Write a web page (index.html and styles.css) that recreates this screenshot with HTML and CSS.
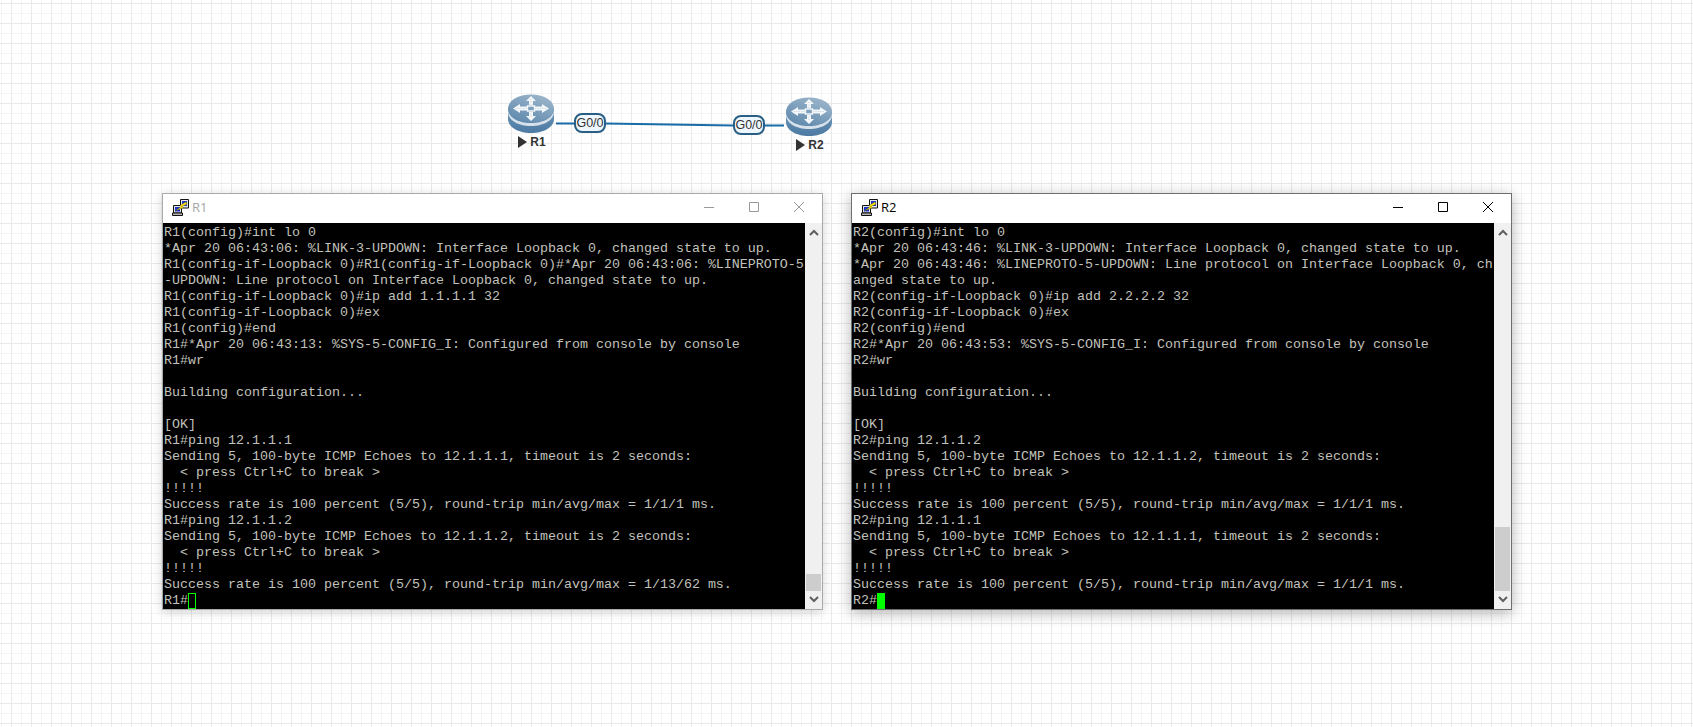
FILE: index.html
```html
<!DOCTYPE html>
<html lang="en">
<head>
<meta charset="utf-8">
<title>Topology</title>
<link rel="stylesheet" href="styles.css">
</head>
<body>
<main class="canvas">
  <svg class="defs" width="0" height="0" aria-hidden="true">
    <defs>
      <linearGradient id="top" x1="0.2" y1="1" x2="0.8" y2="0"><stop offset="0" stop-color="#5f89ad"/><stop offset="1" stop-color="#9db6cb"/></linearGradient>
      <linearGradient id="side" x1="0" y1="0" x2="0" y2="1"><stop offset="0" stop-color="#6f97b8"/><stop offset="1" stop-color="#4c7aa3"/></linearGradient>
      <symbol id="router" viewBox="0 0 46 40">
        <path d="M0 14v11c0 8 10 14 23 14s23-6 23-14V14z" fill="url(#side)"/>
        <path d="M0 15c0 8 10 14 23 14s23-6 23-14v3c0 8-10 14-23 14S0 26 0 18z" fill="#d5e0ea"/>
        <ellipse cx="23" cy="14.500" rx="23" ry="14" fill="url(#top)"/>
        <path d="M23 2l5 5h-3v4h-4V7h-3zM23 27l-5-5h3v-4h4v4h3zM5 14.500l7-4.500v2.500h7v4h-7V19zM41 14.500L34 19v-2.500h-7v-4h7V10z" fill="#f4f7fa"/>
        <path d="M8 14.500h30M23 5v19" stroke="#9fb8cc" stroke-width=".6" stroke-dasharray="1 1.400" fill="none"/>
        <path d="M19.500 12h7v5h-7z" fill="#7ea0bd" stroke="#f4f7fa" stroke-width="1.400"/>
      </symbol>
      <symbol id="putty" viewBox="0 0 17 17">
        <path d="M8.500 .5h8v8.500h-8z" fill="#e4e4e4" stroke="#111"/>
        <path d="M10 2h5v5h-5z" fill="#1f35c4"/>
        <path d="M1.500 6.500h8V14h-8z" fill="#e4e4e4" stroke="#111"/>
        <path d="M3 8h5v4.500H3z" fill="#1f35c4"/>
        <path d="M.5 14h10v2.500H.5z" fill="#b5b5b5" stroke="#111"/>
        <path d="M14 3L8 6.500l1.500 1L4 11.500l7.500-3L10 7.500 15 5z" fill="#ffe600" stroke="#8a7a00" stroke-width=".4"/>
      </symbol>
      <symbol id="chev-up" viewBox="0 0 10 7"><path d="M1 6l4-4 4 4" fill="none" stroke="#606060" stroke-width="2"/></symbol>
      <symbol id="chev-down" viewBox="0 0 10 7"><path d="M1 1l4 4 4-4" fill="none" stroke="#606060" stroke-width="2"/></symbol>
    </defs>
  </svg>

  <svg class="links" width="1693" height="727" aria-hidden="true">
    <path d="M556 123.500L576 123.500M605 123.500L733 125.500M765 125.500H784" fill="none" stroke="#1a6ca8" stroke-width="2"/>
  </svg>

  <div class="node node-r1">
    <svg class="router" width="46" height="40"><use href="#router"/></svg>
    <div class="node-label"><span class="play"></span>R1</div>
  </div>
  <div class="node node-r2">
    <svg class="router" width="46" height="40"><use href="#router"/></svg>
    <div class="node-label"><span class="play"></span>R2</div>
  </div>
  <span class="port port-a">G0/0</span>
  <span class="port port-b">G0/0</span>

  <section class="win win-r1 inactive">
    <header class="titlebar">
      <svg class="appicon" width="17" height="17"><use href="#putty"/></svg>
      <span class="wintitle">R1</span>
      <span class="controls">
        <svg width="14" height="14" viewBox="0 0 14 14"><path d="M2 7.500h10" stroke="currentColor" fill="none"/></svg>
        <svg width="14" height="14" viewBox="0 0 14 14"><path d="M2.500 2.500h9v9h-9z" stroke="currentColor" fill="none"/></svg>
        <svg width="14" height="14" viewBox="0 0 14 14"><path d="M2 2l10 10M12 2L2 12" stroke="currentColor" fill="none"/></svg>
      </span>
    </header>
    <div class="body">
      <pre class="term">R1(config)#int lo 0
*Apr 20 06:43:06: %LINK-3-UPDOWN: Interface Loopback 0, changed state to up.
R1(config-if-Loopback 0)#R1(config-if-Loopback 0)#*Apr 20 06:43:06: %LINEPROTO-5
-UPDOWN: Line protocol on Interface Loopback 0, changed state to up.
R1(config-if-Loopback 0)#ip add 1.1.1.1 32
R1(config-if-Loopback 0)#ex
R1(config)#end
R1#*Apr 20 06:43:13: %SYS-5-CONFIG_I: Configured from console by console
R1#wr

Building configuration...

[OK]
R1#ping 12.1.1.1
Sending 5, 100-byte ICMP Echoes to 12.1.1.1, timeout is 2 seconds:
  &lt; press Ctrl+C to break &gt;
!!!!!
Success rate is 100 percent (5/5), round-trip min/avg/max = 1/1/1 ms.
R1#ping 12.1.1.2
Sending 5, 100-byte ICMP Echoes to 12.1.1.2, timeout is 2 seconds:
  &lt; press Ctrl+C to break &gt;
!!!!!
Success rate is 100 percent (5/5), round-trip min/avg/max = 1/13/62 ms.
R1#<span class="cursor hollow"></span></pre>
      <div class="scrollbar">
        <svg class="arrow" width="10" height="7"><use href="#chev-up"/></svg>
        <div class="track track-r1"><div class="thumb"></div></div>
        <svg class="arrow" width="10" height="7"><use href="#chev-down"/></svg>
      </div>
    </div>
  </section>

  <section class="win win-r2">
    <header class="titlebar">
      <svg class="appicon" width="17" height="17"><use href="#putty"/></svg>
      <span class="wintitle">R2</span>
      <span class="controls">
        <svg width="14" height="14" viewBox="0 0 14 14"><path d="M2 7.500h10" stroke="currentColor" fill="none"/></svg>
        <svg width="14" height="14" viewBox="0 0 14 14"><path d="M2.500 2.500h9v9h-9z" stroke="currentColor" fill="none"/></svg>
        <svg width="14" height="14" viewBox="0 0 14 14"><path d="M2 2l10 10M12 2L2 12" stroke="currentColor" fill="none"/></svg>
      </span>
    </header>
    <div class="body">
      <pre class="term">R2(config)#int lo 0
*Apr 20 06:43:46: %LINK-3-UPDOWN: Interface Loopback 0, changed state to up.
*Apr 20 06:43:46: %LINEPROTO-5-UPDOWN: Line protocol on Interface Loopback 0, ch
anged state to up.
R2(config-if-Loopback 0)#ip add 2.2.2.2 32
R2(config-if-Loopback 0)#ex
R2(config)#end
R2#*Apr 20 06:43:53: %SYS-5-CONFIG_I: Configured from console by console
R2#wr

Building configuration...

[OK]
R2#ping 12.1.1.2
Sending 5, 100-byte ICMP Echoes to 12.1.1.2, timeout is 2 seconds:
  &lt; press Ctrl+C to break &gt;
!!!!!
Success rate is 100 percent (5/5), round-trip min/avg/max = 1/1/1 ms.
R2#ping 12.1.1.1
Sending 5, 100-byte ICMP Echoes to 12.1.1.1, timeout is 2 seconds:
  &lt; press Ctrl+C to break &gt;
!!!!!
Success rate is 100 percent (5/5), round-trip min/avg/max = 1/1/1 ms.
R2#<span class="cursor"></span></pre>
      <div class="scrollbar">
        <svg class="arrow" width="10" height="7"><use href="#chev-up"/></svg>
        <div class="track track-r2"><div class="thumb"></div></div>
        <svg class="arrow" width="10" height="7"><use href="#chev-down"/></svg>
      </div>
    </div>
  </section>
</main>
</body>
</html>
```
FILE: styles.css
```css
html, body {
  margin: 0;
  padding: 0;
  height: 100%;
  overflow: hidden;
}

.canvas {
  position: relative;
  width: 1693px;
  height: 727px;
  overflow: hidden;
  background-color: #fff;
  background-image:
    linear-gradient(to right, #e9e9e9 1px, transparent 1px),
    linear-gradient(to bottom, #e9e9e9 1px, transparent 1px),
    linear-gradient(to right, #f4f4f4 1px, transparent 1px),
    linear-gradient(to bottom, #f4f4f4 1px, transparent 1px);
  background-size: 20px 20px;
  background-position: 11px 0, 0 3px, 1px 0, 0 13px;
}

.defs { position: absolute; }
.links { position: absolute; left: 0; top: 0; }

.node {
  position: absolute;
  width: 46px;
  display: flex;
  flex-direction: column;
  align-items: center;
}
.node-r1 { left: 508px; top: 94px; }
.node-r2 { left: 786px; top: 97px; }
.router { display: block; }

.node-label {
  display: flex;
  align-items: center;
  gap: 3px;
  margin-top: 1px;
  font: bold 12px/14px "Liberation Sans", Arial, sans-serif;
  color: #333;
  transform: translateX(1px);
}
.play {
  width: 0;
  height: 0;
  border-left: 9px solid #333;
  border-top: 6px solid transparent;
  border-bottom: 6px solid transparent;
}

.port {
  position: absolute;
  box-sizing: border-box;
  height: 20px;
  width: 32px;
  text-align: center;
  font: 12.5px/16px "Liberation Sans", Arial, sans-serif;
  color: #333;
  background: #eef7fd;
  border: 2px solid #2a5f85;
  border-radius: 8px;
}
.port-a { left: 574px; top: 113px; }
.port-b { left: 733px; top: 115px; }

.win {
  position: absolute;
  top: 193px;
  box-sizing: border-box;
  width: 661px;
  height: 417px;
  display: flex;
  flex-direction: column;
  background: #fff;
  border: 1px solid #aaa;
  box-shadow: 0 2px 10px rgba(0, 0, 0, .18);
}
.win-r1 { left: 162px; }
.win-r2 {
  left: 851px;
  border-color: #6e6e6e;
  box-shadow: 0 3px 14px rgba(0, 0, 0, .3);
}

.titlebar {
  flex: 0 0 29px;
  box-sizing: border-box;
  padding: 0 0 3px 9px;
  display: flex;
  align-items: center;
  font: 13px/16px "Open Sans", "Noto Sans", sans-serif;
  color: #000;
}
.appicon { flex: none; margin-right: 3px; }
.wintitle { flex: 1; }
.inactive .wintitle { color: #a6a6a6; }

.controls {
  display: flex;
  gap: 31px;
  padding-right: 16px;
  color: #000;
}
.controls svg { display: block; }
.inactive .controls { color: #999; }

.body {
  flex: 1;
  display: flex;
  min-height: 0;
  background: #000;
}

.term {
  flex: 1;
  margin: 0;
  padding: 2px 0 0 1px;
  overflow: hidden;
  font: 13.33px/16px "Liberation Mono", "Courier New", monospace;
  letter-spacing: 0;
  color: #c2c2bc;
  white-space: pre;
}

.cursor {
  display: inline-block;
  box-sizing: border-box;
  width: 8px;
  height: 16px;
  vertical-align: top;
  background: #00ff00;
}
.cursor.hollow {
  background: transparent;
  border: 1px solid #00ff00;
}

.scrollbar {
  flex: 0 0 17px;
  display: flex;
  flex-direction: column;
  align-items: center;
  padding: 6px 0;
  box-sizing: border-box;
  background: #f0f0f0;
}
.arrow { display: block; flex: none; }
.track {
  flex: 1;
  align-self: stretch;
  display: flex;
  flex-direction: column;
  justify-content: flex-end;
  padding: 6px 1px 5px;
}
.thumb { background: #cdcdcd; }
.track-r1 .thumb { height: 17px; }
.track-r2 .thumb { height: 64px; }
```
